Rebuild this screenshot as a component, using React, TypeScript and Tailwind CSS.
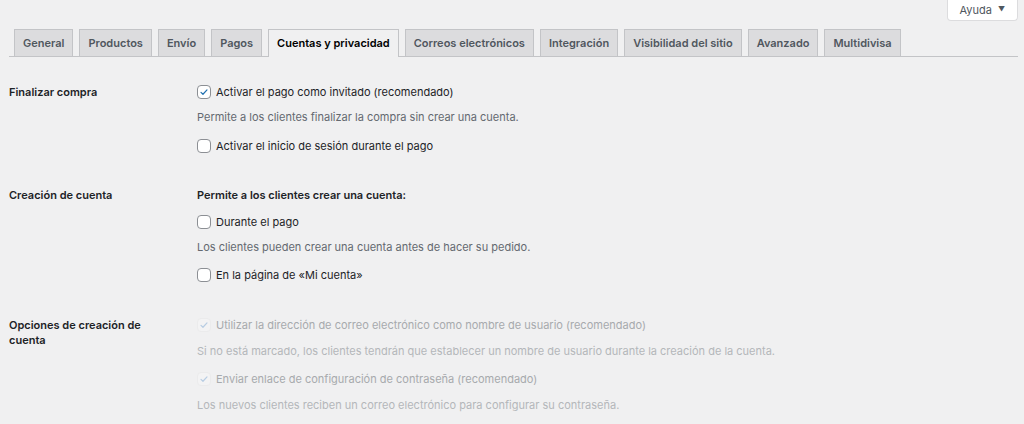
import React from 'react'

const tabs = ['General', 'Productos', 'Envío', 'Pagos', 'Cuentas y privacidad', 'Correos electrónicos', 'Integración', 'Visibilidad del sitio', 'Avanzado', 'Multidivisa']

function Check({ checked, disabled }: { checked?: boolean, disabled?: boolean }) {
    return (
        <span
            className={
                'flex h-[14px] w-[14px] shrink-0 items-center justify-center rounded-[4px] border ' +
                (disabled ? 'border-[#ebebec] bg-[#f3f3f4]' : 'border-[#8c8f94] bg-white')
            }
        >
            {checked && (
                <svg viewBox="0 0 20 20" className="h-[14px] w-[14px]">
                    <path
                        d="M5 10.5 L8.3 13.8 L15 6.5"
                        fill="none"
                        stroke={disabled ? '#b8cde3' : '#2271b1'}
                        strokeWidth="2"
                        strokeLinecap="round"
                        strokeLinejoin="round"
                    />
                </svg>
            )}
        </span>
    )
}

function Option({ label, checked, disabled, className }: { label: string, checked?: boolean, disabled?: boolean, className?: string }) {
    return (
        <div className={'flex h-[20px] items-center gap-[5px] ' + (className || '')}>
            <Check checked={checked} disabled={disabled} />
            <span className={disabled ? 'text-[#a7aaad]' : 'text-[#1d2327]'}>{label}</span>
        </div>
    )
}

function Desc({ text, disabled, className }: { text: string, disabled?: boolean, className?: string }) {
    return (
        <p className={'flex h-[20px] items-center ' + (disabled ? 'text-[#b4b7ba] ' : 'text-[#646970] ') + (className || '')}>
            {text}
        </p>
    )
}

export default function App() {
    return (
        <div className="min-h-[424px] bg-[#f0f0f1] pl-[9px] pr-[6px] text-[11px] text-[#1d2327]" style={{ fontFamily: 'Inter, "Liberation Sans", sans-serif' }}>
            <div className="flex justify-end">
                <button className="flex h-[21px] items-center gap-[6px] rounded-b-[4px] border border-t-0 border-[#dcdcde] bg-white pl-[11px] pr-[12px] text-[11px] text-[#50575e]">
                    Ayuda
                    <span className="text-[7px]">▼</span>
                </button>
            </div>

            <nav className="mt-[8px] flex h-[28px] items-end gap-[6px] border-b border-[#c3c4c7] pl-[5px]">
                {tabs.map((t) => (
                    <div
                        key={t}
                        className={
                            'flex h-[27px] items-center whitespace-nowrap border border-b-0 border-[#c3c4c7] px-[8px] text-[11px] font-semibold ' +
                            (t === 'Cuentas y privacidad'
                                ? '-mb-px h-[28px] bg-[#f0f0f1] text-black'
                                : 'bg-[#dcdcde] text-[#50575e]')
                        }
                    >
                        {t}
                    </div>
                ))}
            </nav>

            <div className="mt-[25px]">
                <div className="flex">
                    <div className="w-[188px] shrink-0 leading-[20px] font-semibold">Finalizar compra</div>
                    <div>
                        <Option label="Activar el pago como invitado (recomendado)" checked />
                        <Desc text="Permite a los clientes finalizar la compra sin crear una cuenta." className="mt-[5px]" />
                        <Option label="Activar el inicio de sesión durante el pago" className="mt-[9px]" />
                    </div>
                </div>

                <div className="mt-[29px] flex">
                    <div className="w-[188px] shrink-0 leading-[20px] font-semibold">Creación de cuenta</div>
                    <div>
                        <p className="flex h-[20px] items-center font-semibold">Permite a los clientes crear una cuenta:</p>
                        <Option label="Durante el pago" className="mt-[7px]" />
                        <Desc text="Los clientes pueden crear una cuenta antes de hacer su pedido." className="mt-[5px]" />
                        <Option label="En la página de «Mi cuenta»" className="mt-[8px]" />
                    </div>
                </div>

                <div className="mt-[30px] flex">
                    <div className="w-[188px] shrink-0 pt-[3px] pr-[20px] leading-[15px] font-semibold">Opciones de creación de cuenta</div>
                    <div>
                        <Option label="Utilizar la dirección de correo electrónico como nombre de usuario (recomendado)" checked disabled />
                        <Desc text="Si no está marcado, los clientes tendrán que establecer un nombre de usuario durante la creación de la cuenta." disabled className="mt-[6px]" />
                        <Option label="Enviar enlace de configuración de contraseña (recomendado)" checked disabled className="mt-[8px]" />
                        <Desc text="Los nuevos clientes reciben un correo electrónico para configurar su contraseña." disabled className="mt-[6px]" />
                    </div>
                </div>
            </div>
        </div>
    )
}
